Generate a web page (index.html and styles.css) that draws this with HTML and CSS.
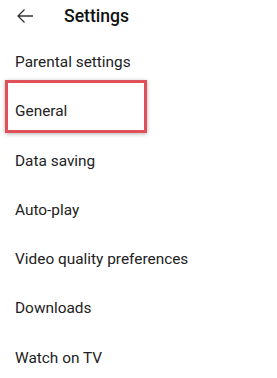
FILE: index.html
```html
<!DOCTYPE html>
<html lang="en">
<head>
    <meta charset="UTF-8">
    <meta name="viewport" content="width=device-width, initial-scale=1.0">
    <title>Settings</title>
    <link rel="stylesheet" href="styles.css">
</head>
<body>
    <div class="header">
        <svg class="back" width="18" height="16" viewBox="0 0 18 16">
            <path d="M17 8H2M8.5 1.5L2 8l6.5 6.5" fill="none" stroke="#333" stroke-width="1.3"/>
        </svg>
        <h1>Settings</h1>
    </div>
    <ul class="menu">
        <li>Parental settings</li>
        <li class="selected">General<span class="highlight"></span></li>
        <li>Data saving</li>
        <li>Auto-play</li>
        <li>Video quality preferences</li>
        <li>Downloads</li>
        <li>Watch on TV</li>
    </ul>
</body>
</html>
```
FILE: styles.css
```css
body {
    margin: 0;
    font-family: Roboto, "Liberation Sans", sans-serif;
    background-color: white;
    color: #222;
}
.header {
    height: 32px;
    display: flex;
    align-items: center;
}
.back {
    margin-left: 16px;
}
.header h1 {
    margin: 0 0 0 30px;
    font-size: 17.6px;
    font-weight: 500;
    color: #111;
}
.menu {
    list-style: none;
    margin: 0;
    padding: 6px 0 0 0;
}
.menu li {
    position: relative;
    height: 49.3px;
    line-height: 49.3px;
    padding-left: 15px;
    font-size: 15.4px;
}
.highlight {
    position: absolute;
    left: 5px;
    top: -7px;
    width: 142px;
    height: 53px;
    box-sizing: border-box;
    border: 3px solid #e0505a;
    box-shadow: 0 1px 4px rgba(0,0,0,0.3);
}
```
